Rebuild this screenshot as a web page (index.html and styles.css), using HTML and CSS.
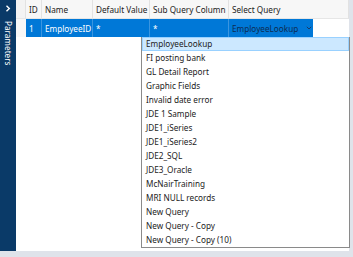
FILE: index.html
```html
<!DOCTYPE html>
<html>
<head>
<meta charset="utf-8">
<link rel="stylesheet" href="styles.css">
</head>
<body>
<div class="frame">
  <div class="sidebar">
    <svg class="chev" width="6" height="7" viewBox="0 0 6 7"><path d="M1.5 0.8 L4.3 3.5 L1.5 6.2" fill="none" stroke="#fff" stroke-width="1.4"/></svg>
    <span class="label">Parameters</span>
  </div>
  <div class="grid">
    <div class="row head">
      <div class="c rh"></div>
      <div class="c id">ID</div>
      <div class="c name">Name</div>
      <div class="c def">Default Value</div>
      <div class="c sub">Sub Query Column</div>
      <div class="c sel">Select Query</div>
    </div>
    <div class="row sel-row">
      <div class="c rh"></div>
      <div class="c id b">1</div>
      <div class="c name b">EmployeeID</div>
      <div class="c def b">*</div>
      <div class="c sub b">*</div>
      <div class="c sel"><div class="combo">EmployeeLookup<svg class="arrow" width="6" height="4" viewBox="0 0 6 4"><path d="M0.8 0.8 L3 3 L5.2 0.8" fill="none" stroke="#1a3a66" stroke-width="1"/></svg></div></div>
    </div>
    <div class="dropdown">
      <div class="item hl">EmployeeLookup</div>
      <div class="item">FI posting bank</div>
      <div class="item">GL Detail Report</div>
      <div class="item">Graphic Fields</div>
      <div class="item">Invalid date error</div>
      <div class="item">JDE 1 Sample</div>
      <div class="item">JDE1_iSeries</div>
      <div class="item">JDE1_iSeries2</div>
      <div class="item">JDE2_SQL</div>
      <div class="item">JDE3_Oracle</div>
      <div class="item">McNairTraining</div>
      <div class="item">MRI NULL records</div>
      <div class="item">New Query</div>
      <div class="item">New Query - Copy</div>
      <div class="item">New Query - Copy (10)</div>
    </div>
  </div>
</div>
</body>
</html>
```
FILE: styles.css
```css
html, body {
  margin: 0;
  padding: 0;
}
body {
  width: 353px;
  height: 257px;
  background: #dfe3ea;
  font-family: "Noto Sans", "Open Sans", sans-serif;
  font-size: 8.2px;
  color: #222;
  overflow: hidden;
}
.frame {
  display: flex;
  width: 349px;
  height: 251px;
  background: #fff;
}
.sidebar {
  width: 16px;
  flex: none;
  background: #0a3a68;
  display: flex;
  flex-direction: column;
  align-items: center;
  padding-top: 5px;
  gap: 9px;
  box-sizing: border-box;
}
.chev {
  display: block;
}
.label {
  writing-mode: vertical-rl;
  color: #fff;
  font-size: 8.2px;
  line-height: 10px;
}
.grid {
  flex: 1;
  position: relative;
}
.row {
  display: grid;
  grid-template-columns: 10px 16px 51px 57px 79px 1fr;
}
.head {
  height: 19px;
  background: #f7f7f7;
}
.head .c {
  border-right: 1px solid #e2e2e2;
  border-bottom: 1px solid #e6e6e6;
}
.c {
  box-sizing: border-box;
  padding-left: 3px;
  display: flex;
  align-items: center;
  white-space: nowrap;
  overflow: hidden;
}
.rh {
  background: #f3f3f3;
  padding: 0;
}
.sel-row {
  height: 18px;
}
.sel-row .rh {
  background: #f7f7f7;
}
.b {
  background: #0078d7;
  color: #fff;
  border-right: 1px solid #3a95e0;
}
.sel-row .sel {
  padding: 0;
}
.combo {
  width: 84px;
  height: 100%;
  background: #0078d7;
  color: #0d2c52;
  display: flex;
  align-items: center;
  padding-left: 3px;
  box-sizing: border-box;
  gap: 8px;
}
.arrow {
  display: block;
}
.dropdown {
  position: absolute;
  left: 125px;
  top: 37px;
  width: 209px;
  height: 211px;
  box-sizing: border-box;
  border: 1px solid #8a8a8a;
  border-top: none;
  background: #fff;
}
.item {
  height: 14px;
  line-height: 14px;
  padding-left: 4px;
  box-sizing: border-box;
  color: #222;
  white-space: nowrap;
}
.item.hl {
  background: #cce8ff;
  border: 1px solid #99d1ff;
  line-height: 12px;
  padding-left: 3px;
}
```
